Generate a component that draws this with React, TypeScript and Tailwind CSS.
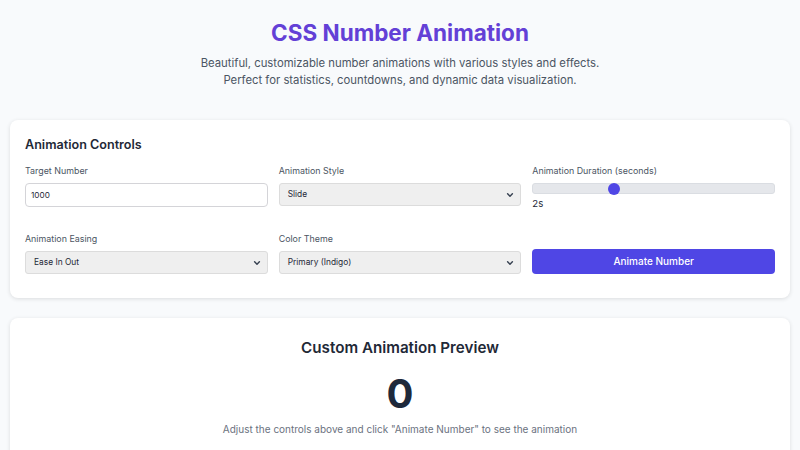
import React from 'react';

const Chevron = () => (
  <svg width="8" height="8" viewBox="0 0 10 10" className="absolute right-[6px] top-1/2 -translate-y-1/2 pointer-events-none">
    <path d="M2 3.5 L5 6.5 L8 3.5" fill="none" stroke="#374151" strokeWidth="1.8" strokeLinecap="round" strokeLinejoin="round" />
  </svg>
);

const FakeSelect = ({ value }: { value: string }) => (
  <div className="relative h-[23px] bg-[#efefef] border border-[#dcdcdc] rounded-[3px] flex items-center pl-[8px] text-[8.4px] text-[#1f2937]">
    {value}
    <Chevron />
  </div>
);

const Label = ({ children }: { children: React.ReactNode }) => (
  <div className="text-[8.9px] leading-[14px] text-[#4b5563] mb-[5px]">{children}</div>
);

export default function App() {
  const [duration] = React.useState(2);
  const pct = ((duration - 0.5) / 4.5) * 100;

  return (
    <div className="min-h-screen bg-[#f8fafc] px-[10px] font-['Inter',sans-serif]">
      <header className="pt-[18px] text-center">
        <h1 className="text-[22.5px] leading-[30px] font-bold text-[#6340d6]">CSS Number Animation</h1>
        <p className="mt-[7px] text-[11.3px] leading-[17px] text-[#4b5563]">
          Beautiful, customizable number animations with various styles and effects.
          <br />
          Perfect for statistics, countdowns, and dynamic data visualization.
        </p>
      </header>

      <section className="mt-[31px] bg-white rounded-[8px] shadow-[0_1px_4px_rgba(0,0,0,0.12)] px-[15px] pt-[16px] pb-[24px]">
        <h2 className="text-[12.6px] leading-[18px] font-semibold text-[#1f2937]">Animation Controls</h2>
        <div className="mt-[10px] grid grid-cols-3 gap-x-[11px] gap-y-[20px] items-end">
          <div className="self-start">
            <Label>Target Number</Label>
            <div className="h-[24px] bg-white border border-[#d4d4d8] rounded-[4px] flex items-center pl-[5px] text-[8.2px] text-[#1f2937]">
              1000
            </div>
          </div>
          <div className="self-start">
            <Label>Animation Style</Label>
            <FakeSelect value="Slide" />
          </div>
          <div className="self-start">
            <Label>Animation Duration (seconds)</Label>
            <div className="relative h-[11px] bg-[#e5e7eb] border border-[#dadde2] rounded-[3px]">
              <div
                className="absolute top-1/2 w-[12px] h-[12px] -translate-x-1/2 -translate-y-1/2 rounded-full bg-[#4f46e5]"
                style={{ left: `${pct}%` }}
              />
            </div>
            <div className="mt-[2px] text-[9.6px] leading-[16px] text-[#1f2937]">{duration}s</div>
          </div>

          <div>
            <Label>Animation Easing</Label>
            <FakeSelect value="Ease In Out" />
          </div>
          <div>
            <Label>Color Theme</Label>
            <FakeSelect value="Primary (Indigo)" />
          </div>
          <div>
            <button className="w-full h-[25px] bg-[#4f46e5] text-white text-[10px] font-medium rounded-[4px]">
              Animate Number
            </button>
          </div>
        </div>
      </section>

      <section className="mt-[20px] bg-white rounded-[8px] shadow-[0_1px_4px_rgba(0,0,0,0.12)] pt-[20px] pb-[30px] text-center">
        <h2 className="text-[15.2px] leading-[20px] font-semibold text-[#1f2937]">Custom Animation Preview</h2>
        <div className="mt-[12px] text-[40px] leading-[48px] font-bold text-[#1e293b]">0</div>
        <p className="mt-[4px] text-[10px] leading-[14px] text-[#6b7280]">
          Adjust the controls above and click "Animate Number" to see the animation
        </p>
      </section>
    </div>
  );
}
